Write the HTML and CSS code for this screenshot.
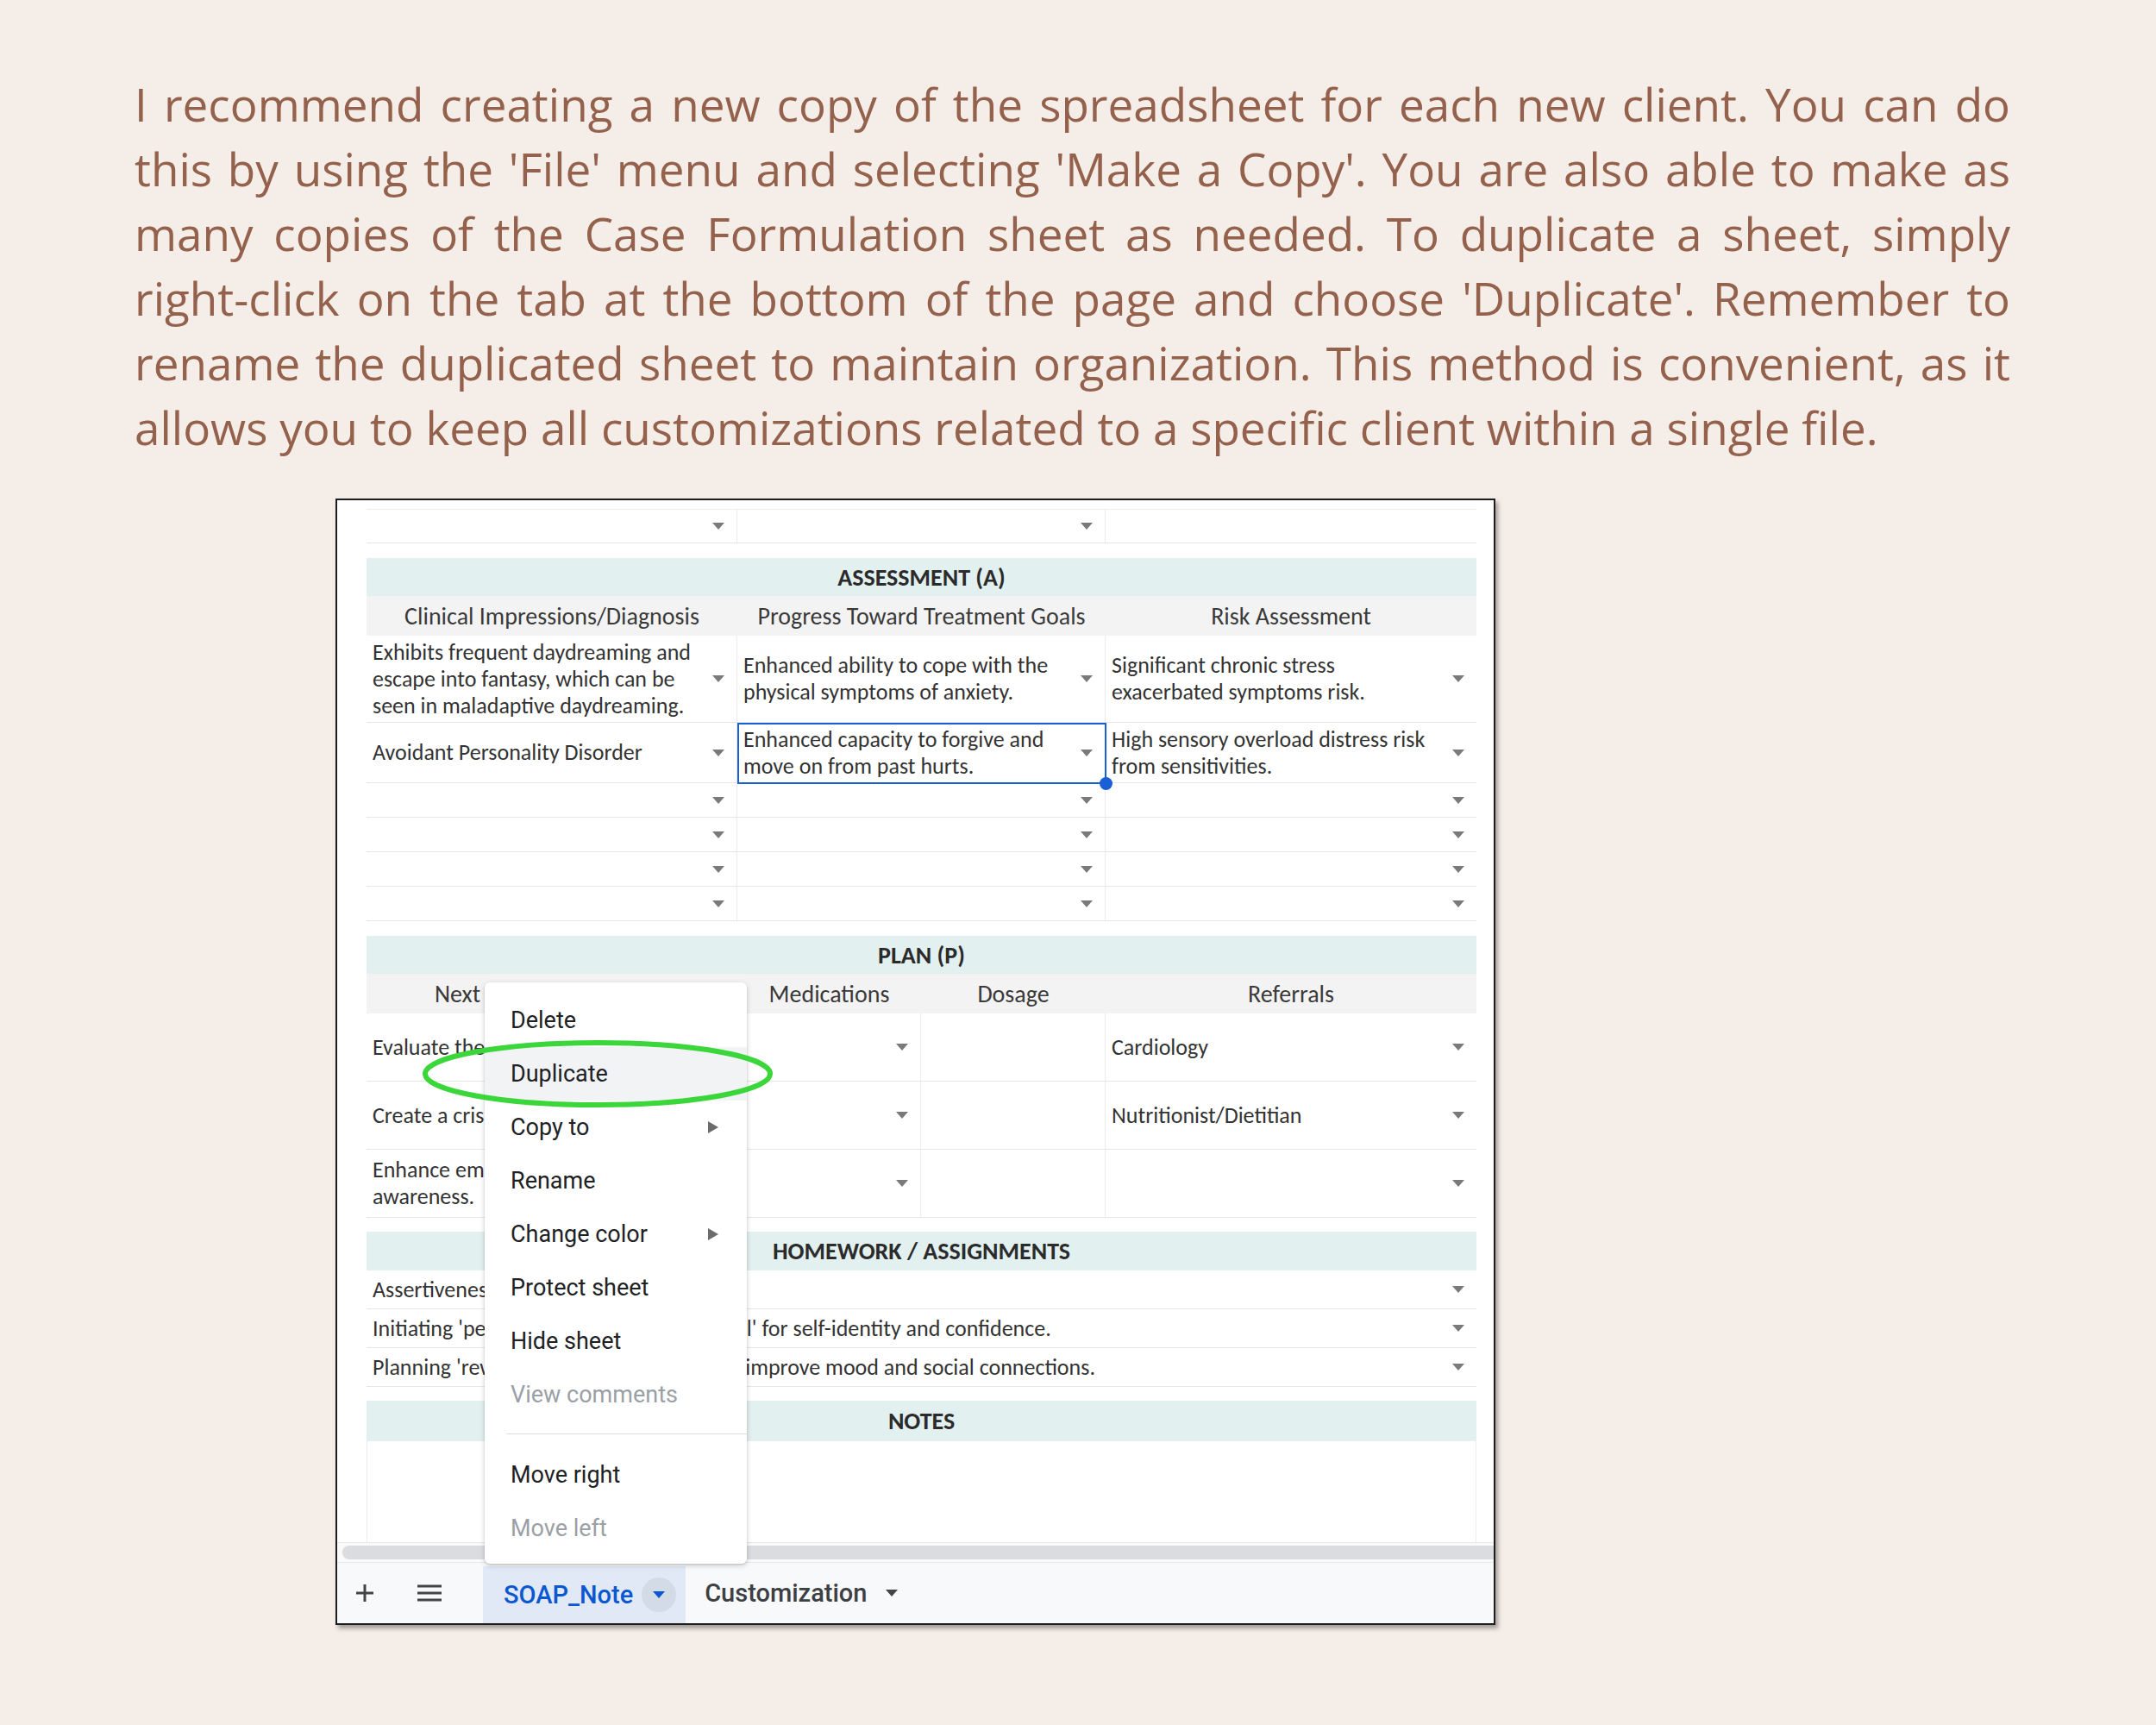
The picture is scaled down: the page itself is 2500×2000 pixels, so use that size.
FILE: index.html
```html
<!DOCTYPE html>
<html lang="en">
  <head>
    <meta charset="UTF-8" />
    <link rel="stylesheet" href="styles.css">
    <title>Duplicating the SOAP Note sheet</title>
  </head>
  <body>
    <p class="intro">
      <span class="ln">I recommend creating a new copy of the spreadsheet for each new client. You can do</span>
      <span class="ln">this by using the 'File' menu and selecting 'Make a Copy'. You are also able to make as</span>
      <span class="ln">many copies of the Case Formulation sheet as needed. To duplicate a sheet, simply</span>
      <span class="ln">right-click on the tab at the bottom of the page and choose 'Duplicate'. Remember to</span>
      <span class="ln">rename the duplicated sheet to maintain organization. This method is convenient, as it</span>
      <span class="ln last">allows you to keep all customizations related to a specific client within a single file.</span>
    </p>

    <div class="shot">
      <div class="sheet">
        <div class="row top">
          <div class="cell w1"><span class="txt"></span><i class="dd"></i></div>
          <div class="cell w2"><span class="txt"></span><i class="dd"></i></div>
          <div class="cell w3 end"></div>
        </div>
        <div class="gap"></div>

        <div class="band">ASSESSMENT (A)</div>
        <div class="row sub">
          <div class="head w1">Clinical Impressions/Diagnosis</div>
          <div class="head w2">Progress Toward Treatment Goals</div>
          <div class="head w3">Risk Assessment</div>
        </div>
        <div class="row r1">
          <div class="cell w1"><span class="txt">Exhibits frequent daydreaming and<br>escape into fantasy, which can be<br>seen in maladaptive daydreaming.</span><i class="dd"></i></div>
          <div class="cell w2"><span class="txt">Enhanced ability to cope with the<br>physical symptoms of anxiety.</span><i class="dd"></i></div>
          <div class="cell w3 end"><span class="txt">Significant chronic stress<br>exacerbated symptoms risk.</span><i class="dd"></i></div>
        </div>
        <div class="row r2">
          <div class="cell w1"><span class="txt">Avoidant Personality Disorder</span><i class="dd"></i></div>
          <div class="cell w2"><span class="txt">Enhanced capacity to forgive and<br>move on from past hurts.</span><i class="dd"></i></div>
          <div class="cell w3 end"><span class="txt">High sensory overload distress risk<br>from sensitivities.</span><i class="dd"></i></div>
        </div>
        <div class="row empty">
          <div class="cell w1"><span class="txt"></span><i class="dd"></i></div>
          <div class="cell w2"><span class="txt"></span><i class="dd"></i></div>
          <div class="cell w3 end"><span class="txt"></span><i class="dd"></i></div>
        </div>
        <div class="row empty">
          <div class="cell w1"><span class="txt"></span><i class="dd"></i></div>
          <div class="cell w2"><span class="txt"></span><i class="dd"></i></div>
          <div class="cell w3 end"><span class="txt"></span><i class="dd"></i></div>
        </div>
        <div class="row empty">
          <div class="cell w1"><span class="txt"></span><i class="dd"></i></div>
          <div class="cell w2"><span class="txt"></span><i class="dd"></i></div>
          <div class="cell w3 end"><span class="txt"></span><i class="dd"></i></div>
        </div>
        <div class="row empty">
          <div class="cell w1"><span class="txt"></span><i class="dd"></i></div>
          <div class="cell w2"><span class="txt"></span><i class="dd"></i></div>
          <div class="cell w3 end"><span class="txt"></span><i class="dd"></i></div>
        </div>
        <div class="gap"></div>

        <div class="band">PLAN (P)</div>
        <div class="row sub">
          <div class="head w1">Next Steps/Intervention</div>
          <div class="head wm">Medications</div>
          <div class="head wd">Dosage</div>
          <div class="head w3">Referrals</div>
        </div>
        <div class="row plan">
          <div class="cell w1"><span class="txt">Evaluate the coping plan weekly.</span></div>
          <div class="cell wm"><span class="txt"></span><i class="dd"></i></div>
          <div class="cell wd"></div>
          <div class="cell w3 end"><span class="txt">Cardiology</span><i class="dd"></i></div>
        </div>
        <div class="row plan">
          <div class="cell w1"><span class="txt">Create a crisis safety plan.</span></div>
          <div class="cell wm"><span class="txt"></span><i class="dd"></i></div>
          <div class="cell wd"></div>
          <div class="cell w3 end"><span class="txt">Nutritionist/Dietitian</span><i class="dd"></i></div>
        </div>
        <div class="row plan">
          <div class="cell w1"><span class="txt">Enhance emotional regulation and<br>awareness.</span></div>
          <div class="cell wm"><span class="txt"></span><i class="dd"></i></div>
          <div class="cell wd"></div>
          <div class="cell w3 end"><span class="txt"></span><i class="dd"></i></div>
        </div>
        <div class="gap hw-gap"></div>

        <div class="band hw">HOMEWORK / ASSIGNMENTS</div>
        <div class="row task">
          <div class="cell full end"><span class="txt">Assertiveness role-play practice.</span><i class="dd"></i></div>
        </div>
        <div class="row task">
          <div class="cell full end"><span class="txt">Initiating 'personal value and aims journal' for self-identity and confidence.</span><i class="dd"></i></div>
        </div>
        <div class="row task">
          <div class="cell full end"><span class="txt">Planning 'rewarding weekend activity' to improve mood and social connections.</span><i class="dd"></i></div>
        </div>
        <div class="gap hw-gap"></div>

        <div class="band notes-band">NOTES</div>
        <div class="notes"></div>
      </div>

      <div class="scroll"><div class="thumb"></div></div>

      <div class="tabs">
        <svg class="plus" width="24" height="24" viewBox="0 0 24 24">
          <path d="M12 2v20M2 12h20" stroke="#444" stroke-width="3" fill="none" />
        </svg>
        <svg class="burger" width="28" height="20" viewBox="0 0 28 20">
          <path d="M0 2h28M0 10h28M0 18h28" stroke="#444" stroke-width="3" fill="none" />
        </svg>
        <div class="tab active">
          <span>SOAP_Note</span>
          <span class="tab-dd"><i class="tri blue"></i></span>
        </div>
        <div class="tab">
          <span>Customization</span>
          <i class="tri"></i>
        </div>
      </div>

      <!-- overlays -->
      <div class="sel"></div>

      <ul class="menu">
        <li>Delete</li>
        <li class="hot">Duplicate</li>
        <li>Copy to <i class="sub-arrow"></i></li>
        <li>Rename</li>
        <li>Change color <i class="sub-arrow"></i></li>
        <li>Protect sheet</li>
        <li>Hide sheet</li>
        <li class="off">View comments</li>
        <li class="sep"></li>
        <li>Move right</li>
        <li class="off">Move left</li>
      </ul>

      <svg class="ring" width="412" height="82" viewBox="0 0 412 82">
        <ellipse cx="206" cy="41" rx="200" ry="36" fill="none" stroke="#3ad63a" stroke-width="6" />
      </svg>
    </div>
  </body>
</html>
```

FILE: styles.css
```css
* {
  box-sizing: border-box;
}

body {
  background-color: #f5eee8;
  margin: 0;
  padding-bottom: 100px;
}

.intro {
  margin: 83px 0 0 156px;
  width: 2175px;
  font-family: "Open Sans", sans-serif;
  font-size: 53px;
  line-height: 75px;
  color: #94614d;
}
.intro .ln {
  display: block;
  white-space: nowrap;
  text-align: justify;
  text-align-last: justify;
}
.intro .ln.last {
  text-align-last: left;
}

/* the spreadsheet screenshot */
.shot {
  position: relative;
  width: 1345px;
  margin: 45px 0 0 389px;
  background: #fff;
  border: 2px solid #1e1e1e;
  box-shadow: 3px 4px 5px rgba(0, 0, 0, 0.35);
  font-family: "Carlito", "Lato", sans-serif;
  color: #333;
}

.sheet {
  padding: 10px 20px 0 34px;
}

.row {
  display: flex;
  border-bottom: 1px solid #e6e6e6;
}
.row.top {
  height: 40px;
  border-top: 1px solid #ececec;
}
.row.sub {
  height: 46px;
  background: #f3f3f3;
  border-bottom: 0;
}
.row.r1 {
  height: 101px;
}
.row.r2 {
  height: 70px;
}
.row.empty {
  height: 40px;
}
.row.plan {
  height: 79px;
}
.row.task {
  height: 45px;
}

.gap {
  height: 17px;
}
.gap.hw-gap {
  height: 16px;
}

.w1 {
  width: 430px;
}
.w2 {
  width: 427px;
}
.w3 {
  width: 430px;
}
.wm {
  width: 213px;
}
.wd {
  width: 214px;
}
.full {
  width: 1287px;
}

.band {
  height: 44px;
  background: #e2f0f0;
  display: flex;
  align-items: center;
  justify-content: center;
  font-weight: bold;
  font-size: 28px;
  color: #2b2b2b;
}
.band.hw {
  height: 45px;
}
.band.notes-band {
  height: 47px;
}

.head {
  display: flex;
  align-items: center;
  justify-content: center;
  font-size: 28px;
  color: #3a3a3a;
}

.cell {
  display: flex;
  align-items: center;
  padding: 0 14px 0 7px;
  border-right: 1px solid #ececec;
  font-size: 26px;
  line-height: 31px;
}
.cell.end {
  border-right: 0;
}
.cell .txt {
  flex: 1;
  white-space: nowrap;
  overflow: hidden;
}

.dd {
  width: 0;
  height: 0;
  border-left: 7px solid transparent;
  border-right: 7px solid transparent;
  border-top: 8px solid #7a7a7a;
}

.notes {
  height: 117px;
  border-left: 1px solid #ececec;
  border-right: 1px solid #ececec;
}

.scroll {
  height: 24px;
  border-top: 1px solid #e8e8e8;
  border-bottom: 1px solid #e8e8e8;
  padding: 3px 0 0 6px;
  background: #fafafa;
}
.thumb {
  height: 16px;
  background: #dadce0;
  border-radius: 8px 0 0 8px;
}

.tabs {
  height: 70px;
  background: #f8f9fa;
  display: flex;
  align-items: center;
  padding-left: 20px;
  font-family: Roboto, "Noto Sans", sans-serif;
  font-weight: 500;
  font-size: 29px;
  color: #3c4043;
}
.tabs .plus {
  margin-right: 49px;
}
.tabs .burger {
  margin-right: 48px;
}
.tab {
  display: flex;
  align-items: center;
  height: 100%;
  gap: 22px;
  margin-right: 10px;
}
.tab.active {
  align-self: flex-end;
  height: 66px;
  background: #e1e9f6;
  color: #0b57d0;
  padding: 0 11px 0 24px;
  gap: 10px;
  margin-right: 22px;
}
.tab-dd {
  width: 40px;
  height: 40px;
  border-radius: 50%;
  background: #d3dbe6;
  display: flex;
  align-items: center;
  justify-content: center;
}
.tri {
  width: 0;
  height: 0;
  border-left: 7px solid transparent;
  border-right: 7px solid transparent;
  border-top: 8px solid #444;
}
.tri.blue {
  border-top-color: #0b57d0;
}

/* overlays */
.sel {
  position: absolute;
  left: 464px;
  top: 258px;
  width: 428px;
  height: 71px;
  border: 2px solid #1a5fd6;
}
.sel::after {
  content: "";
  position: absolute;
  right: -9px;
  bottom: -9px;
  width: 15px;
  height: 15px;
  border-radius: 50%;
  background: #1a5fd6;
}

.menu {
  position: absolute;
  left: 171px;
  top: 559px;
  width: 304px;
  margin: 0;
  padding: 13px 0 10px;
  list-style: none;
  background: #fff;
  border-radius: 6px;
  box-shadow: 0 2px 6px rgba(0, 0, 0, 0.18), 0 1px 2px rgba(0, 0, 0, 0.12);
  font-family: Roboto, "Noto Sans", sans-serif;
  font-size: 27px;
  color: #202124;
}
.menu li {
  height: 62px;
  display: flex;
  align-items: center;
  justify-content: space-between;
  padding: 0 33px 0 30px;
}
.menu li.hot {
  background: #f1f3f4;
}
.menu li.off {
  color: #9aa0a6;
}
.menu li.sep {
  height: 1px;
  margin: 14px 0 16px 25px;
  padding: 0;
  background: #dadce0;
}
.sub-arrow {
  width: 0;
  height: 0;
  border-top: 7px solid transparent;
  border-bottom: 7px solid transparent;
  border-left: 12px solid #6b6b6b;
}

.ring {
  position: absolute;
  left: 96px;
  top: 624px;
}
```
